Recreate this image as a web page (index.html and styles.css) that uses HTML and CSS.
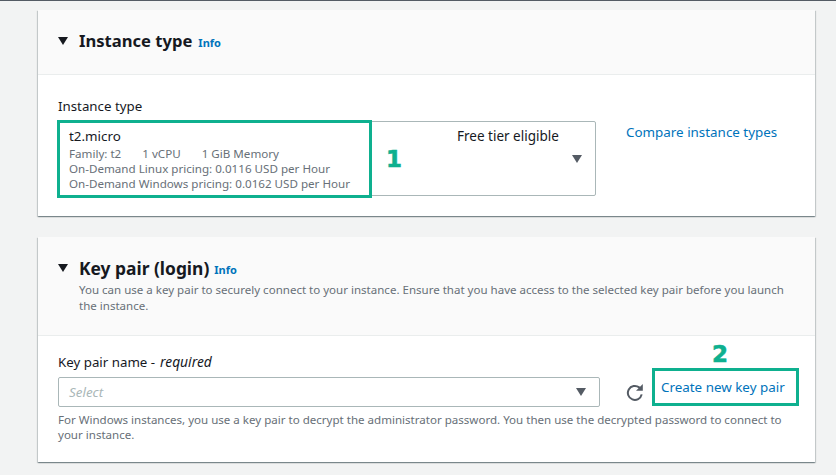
FILE: index.html
```html
<!DOCTYPE html>
<html lang="en">
<head>
<meta charset="utf-8">
<title>Launch instance</title>
<link rel="stylesheet" href="styles.css">
</head>
<body>
<main class="page">
  <section class="card card-instance">
    <header class="card-head head-instance">
      <svg class="caret" viewBox="0 0 10 8" width="10" height="8"><path d="M0 0H10L5 8Z"/></svg>
      <h2 class="title title-instance">Instance type</h2>
      <a class="info info-instance">Info</a>
    </header>
    <div class="card-body body-instance">
      <div class="field-label">Instance type</div>
      <div class="instance-row">
        <div class="select select-instance">
          <div class="option-main">
            <div class="option-name">t2.micro</div>
            <div class="option-meta"><span>Family: t2</span><span>1 vCPU</span><span>1 GiB Memory</span></div>
            <div class="option-line">On-Demand Linux pricing: 0.0116 USD per Hour</div>
            <div class="option-line">On-Demand Windows pricing: 0.0162 USD per Hour</div>
          </div>
          <div class="option-tag">Free tier eligible</div>
          <svg class="select-arrow arrow-instance" viewBox="0 0 10 8" width="10" height="8"><path d="M0 0H10L5 8Z"/></svg>
        </div>
        <a class="link compare">Compare instance types</a>
      </div>
    </div>
    <div class="mark-box box-one"></div>
    <div class="mark-num num-one">1</div>
  </section>

  <section class="card card-key">
    <header class="card-head head-key">
      <svg class="caret caret-key" viewBox="0 0 10 8" width="10" height="8"><path d="M0 0H10L5 8Z"/></svg>
      <div class="head-text">
        <div class="head-line"><h2 class="title title-key">Key pair (login)</h2><a class="info info-key">Info</a></div>
        <p class="desc">You can use a key pair to securely connect to your instance. Ensure that you have access to the selected key pair before you launch the instance.</p>
      </div>
    </header>
    <div class="card-body body-key">
      <div class="field-label">Key pair name - <em>required</em></div>
      <div class="key-row">
        <div class="select select-key">
          <span class="placeholder">Select</span>
          <svg class="select-arrow" viewBox="0 0 10 8" width="10" height="8"><path d="M0 0H10L5 8Z"/></svg>
        </div>
        <svg class="refresh" viewBox="0 0 18 18" width="18" height="18"><path d="M15.7 11.4A7 7 0 1 1 13.2 4.4L15.2 6.2" fill="none" stroke="#545b64" stroke-width="2"/><path d="M16.8 1V7.8H10Z" fill="#545b64"/></svg>
        <a class="link create">Create new key pair</a>
      </div>
      <p class="hint">For Windows instances, you use a key pair to decrypt the administrator password. You then use the decrypted password to connect to your instance.</p>
    </div>
    <div class="mark-box box-two"></div>
    <div class="mark-num num-two">2</div>
  </section>
</main>
</body>
</html>
```
FILE: styles.css
```css
* { box-sizing: border-box; }
html, body { margin: 0; height: 100%; }
body {
  background: #f2f3f3;
  border-top: 1px solid #545b64;
  font-family: "Noto Sans", "Open Sans", sans-serif;
  color: #16191f;
  overflow: hidden;
}
.page {
  width: 777px;
  margin-left: 38px;
  padding-top: 9px;
  display: flex;
  flex-direction: column;
  gap: 21px;
}
.card {
  position: relative;
  background: #fff;
  box-shadow: 0 1px 1px 0 rgba(0, 28, 36, .3), 1px 1px 1px 0 rgba(0, 28, 36, .15), -1px 1px 1px 0 rgba(0, 28, 36, .15);
}
.card-instance { height: 206px; }
.card-key { height: 225px; }
.card-head {
  background: #fafafa;
  border-bottom: 1px solid #eaeded;
  padding-left: 20px;
  display: flex;
}
.head-instance { height: 65px; align-items: center; padding-bottom: 2px; }
.head-key { height: 99px; align-items: flex-start; padding-top: 20px; }
.caret { fill: #16191f; flex: none; margin-right: 11px; }
.caret-key { margin-top: 7px; }
.title { margin: 0; line-height: 22px; font-weight: 700; }
.title-instance { font-size: 16.6px; }
.title-key { font-size: 17.4px; }
.info { font-size: 11px; font-weight: 700; color: #0073bb; line-height: 22px; }
.info-instance { margin-left: 6px; padding-top: 3px; }
.info-key { margin-left: 5px; padding-top: 3px; }
.head-line { display: flex; align-items: center; height: 22px; }
.desc { margin: 3px 0 0; width: 716px; font-size: 11.54px; line-height: 16px; color: #687078; }
.card-body { padding: 0 20px; }
.body-instance { padding-top: 22px; }
.body-key { padding-top: 17px; }
.field-label { font-size: 13.3px; line-height: 18px; color: #16191f; }
.field-label em { font-style: italic; font-size: 13.8px; margin-left: 1.5px; }
.instance-row { display: flex; align-items: flex-start; margin-top: 6px; }
.select {
  position: relative;
  background: #fff;
  border: 1px solid #aab7b8;
  border-radius: 2px;
}
.select-instance { width: 538px; height: 75px; padding: 4px 10px; display: flex; }
.option-main { width: 388px; }
.option-name { font-size: 13.4px; line-height: 20px; }
.option-meta { display: flex; gap: 21px; }
.option-meta, .option-line { font-size: 11.62px; line-height: 15px; color: #687078; }
.option-tag { font-size: 13.5px; line-height: 20px; }
.select-arrow { fill: #545b64; position: absolute; right: 13px; top: 50%; margin-top: -4px; }
.arrow-instance { top: 33px; margin-top: 0; }
.link { color: #0073bb; font-size: 13.4px; line-height: 18px; }
.compare { margin-left: 30px; margin-top: 2px; }
.key-row { display: flex; align-items: center; margin-top: 6px; }
.select-key { width: 542px; height: 30px; padding-left: 10px; display: flex; align-items: center; }
.placeholder { font-size: 13.4px; font-style: italic; color: #aab7b8; }
.refresh { margin-left: 26px; flex: none; margin-top: -1px; }
.create { margin-left: 17px; margin-bottom: 10px; }
.hint { margin: 5px 0 0; font-size: 11.55px; line-height: 15px; color: #687078; width: 735px; }
.mark-box { position: absolute; border: 3px solid #0eb08f; pointer-events: none; }
.box-one { left: 19px; top: 110px; width: 315px; height: 78px; }
.box-two { left: 614px; top: 131px; width: 147px; height: 38px; }
.mark-num {
  position: absolute;
  color: #0eb08f;
  font-family: "DejaVu Sans", sans-serif;
  font-weight: 700;
  font-size: 23px;
  line-height: 24px;
  -webkit-text-stroke: .6px #0eb08f;
}
.num-one { left: 348px; top: 137px; }
.num-two { left: 674px; top: 105px; }
```
